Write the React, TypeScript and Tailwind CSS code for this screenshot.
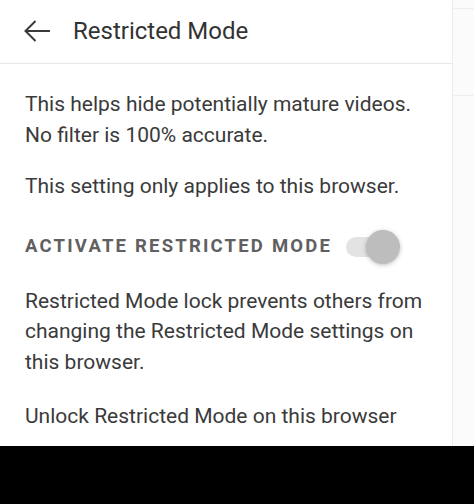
export default function App() {
  return (
    <div className="flex h-[504px] w-[474px] flex-col bg-white font-['Roboto',sans-serif]">
      <div className="flex flex-1">
        <div className="w-[453px] border-r border-[#ececec]">
          <div className="flex h-[64px] items-center border-b border-[#e8e8e8] pb-[2px] pl-[23px]">
            <svg width="28" height="24" viewBox="0 0 28 24" fill="none" stroke="#3a3a3a" strokeWidth="2">
              <path d="M27 12H2.5M12.5 2L2.5 12l10 10" />
            </svg>
            <h1 className="ml-[22px] text-[24px] leading-none text-[#333]">Restricted Mode</h1>
          </div>
          <div className="px-[25px] pt-[25px] text-[21px] leading-[30.5px] text-[#3a3a3a]">
            <p>
              This helps hide potentially mature videos.
              <br />
              No filter is 100% accurate.
            </p>
            <p className="mt-[21px]">This setting only applies to this browser.</p>
            <div className="mt-[25px] flex h-[40px] items-center">
              <span className="text-[18.5px] font-bold tracking-[2.2px] text-[#606060]">ACTIVATE RESTRICTED MODE</span>
              <div className="relative ml-[14px] h-[20px] w-[46px] rounded-full bg-[#e3e3e3]">
                <div className="absolute right-[-8px] top-[-7px] h-[34px] w-[34px] rounded-full bg-[#bdbdbd] shadow-[0_1px_4px_rgba(0,0,0,0.25)]" />
              </div>
            </div>
            <p className="mt-[19px]">
              Restricted Mode lock prevents others from changing the Restricted Mode settings on this browser.
            </p>
            <p className="mt-[24px]">Unlock Restricted Mode on this browser</p>
          </div>
        </div>
        <div className="flex-1 bg-[#fbfbfb]">
          <div className="mt-[8px] border-t border-[#eeeeee]" />
          <div className="mt-[86px] border-t border-[#eeeeee]" />
        </div>
      </div>
      <div className="h-[58px] bg-black" />
    </div>
  )
}
